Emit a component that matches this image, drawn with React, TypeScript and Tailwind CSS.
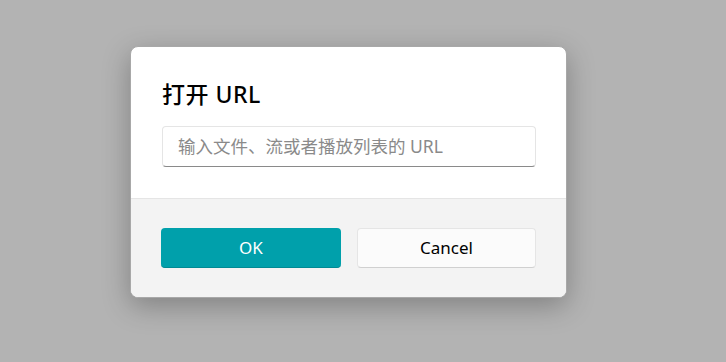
export default function App() {
  const font = { fontFamily: '"Noto Sans", "Noto Sans CJK SC", sans-serif' };
  return (
    <div className="w-[726px] h-[362px] bg-[#b3b3b3] pl-[130px] pt-[46px]" style={font}>
      <div className="w-[437px] h-[252px] rounded-[8px] overflow-hidden bg-white shadow-[0_8px_28px_rgba(0,0,0,0.28)] border border-[#a8a8a8] flex flex-col">
        <div className="h-[151px] px-[31px] pt-[31px] flex flex-col">
          <div className="text-[23px] leading-[32px] text-black font-medium tracking-[0.5px]">打开 URL</div>
          <div className="mt-[16px] h-[41px] w-[374px] rounded-[4px] border border-[#e5e5e5] border-b-[#8a8a8a] bg-white flex items-center px-[15px]">
            <span className="text-[17.5px] text-[#8a8a8a]">输入文件、流或者播放列表的 URL</span>
          </div>
        </div>
        <div className="flex-1 bg-[#f3f3f3] border-t border-[#e5e5e5] px-[30px] pt-[29px] flex gap-[16px]">
          <div className="w-[180px] h-[40px] rounded-[4px] bg-[#00a0ab] border-b border-[#008a94] flex items-center justify-center text-white text-[17px]">OK</div>
          <div className="w-[179px] h-[40px] rounded-[4px] bg-[#fbfbfb] border border-[#e5e5e5] border-b-[#d0d0d0] flex items-center justify-center text-black text-[17px]">Cancel</div>
        </div>
      </div>
    </div>
  );
}
